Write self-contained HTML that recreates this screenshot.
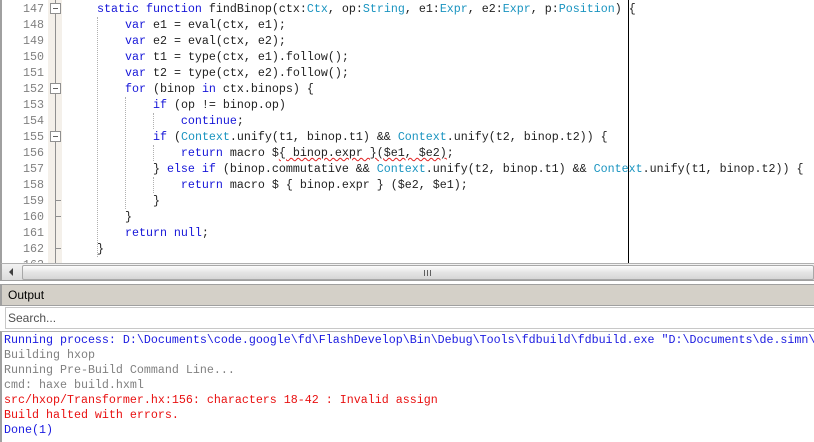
<!DOCTYPE html>
<html><head><style>
*{margin:0;padding:0;box-sizing:border-box}
body{width:814px;height:442px;overflow:hidden;background:#fff;position:relative;font-family:"Liberation Mono",monospace}
.ed{position:absolute;left:0;top:0;width:814px;height:263px;background:#fff;overflow:hidden}
.bl{position:absolute;left:0;top:0;width:2px;height:263px;background:#a0a0a0}
.ln{position:absolute;left:0;width:44px;text-align:right;font-size:11.67px;color:#808080;height:16px;line-height:16px}
.fm{position:absolute;left:48px;top:0;width:14px;height:263px;background:#f4f0ea}
.fl{position:absolute;left:55px;top:0;width:1px;height:263px;background:#909090}
.fb{position:absolute;left:50px;width:11px;height:11px;border:1px solid #909090;background:#fff}
.fb:after{content:"";position:absolute;left:2px;top:4px;width:5px;height:1px;background:#606060}
.ft{position:absolute;left:56px;width:5px;height:1px;background:#909090}
.c{position:absolute;left:69px;font-size:11.67px;line-height:16px;height:16px;white-space:pre;color:#222}
.k{color:#1515d8}.t{color:#1a94c0}
.g{position:absolute;width:0;border-left:1px dotted #b0b0b0}
.sq{text-decoration:underline wavy #e02020;text-decoration-thickness:1px}
.sb{position:absolute;left:0;top:263px;width:814px;height:18px;background:linear-gradient(#f2f2f2,#dcdcdc);border-top:1px solid #b0b0b0;border-bottom:1px solid #a0a0a0;border-left:2px solid #a0a0a0}
.th{position:absolute;left:20px;top:1px;right:0;height:15px;border:1px solid #a8a8a8;border-radius:2px;background:linear-gradient(#fdfdfd,#e4e4e4 50%,#d6d6d6)}
.hd{position:absolute;left:0;top:284px;width:814px;height:22px;background:#d4d0c8;border-top:1px solid #a0a0a0;border-bottom:1px solid #a0a0a0;border-left:2px solid #a0a0a0;font-family:"Liberation Sans",sans-serif;font-size:12px;padding:3px 6px;color:#000}
.sr{position:absolute;left:5px;top:307px;width:809px;height:22px;border:1px solid #c8c8c8;border-right:none;font-family:"Liberation Sans",sans-serif;font-size:12px;color:#505050;padding:3px 2px}
.out{position:absolute;left:0;top:331px;width:814px;height:111px;border-top:1px solid #b0b0b0;border-left:2px solid #a0a0a0}
.o{position:absolute;left:2px;font-size:11.67px;line-height:15px;white-space:pre}
</style></head><body>
<div class="ed">
<div class="bl"></div>
<div class="fm"></div><div class="fl"></div>
<div class="ln" style="top:1px">147</div><div class="ln" style="top:17px">148</div><div class="ln" style="top:33px">149</div><div class="ln" style="top:49px">150</div><div class="ln" style="top:65px">151</div><div class="ln" style="top:81px">152</div><div class="ln" style="top:97px">153</div><div class="ln" style="top:113px">154</div><div class="ln" style="top:129px">155</div><div class="ln" style="top:145px">156</div><div class="ln" style="top:161px">157</div><div class="ln" style="top:177px">158</div><div class="ln" style="top:193px">159</div><div class="ln" style="top:209px">160</div><div class="ln" style="top:225px">161</div><div class="ln" style="top:241px">162</div><div class="ln" style="top:257px">163</div>
<div class="fb" style="top:3px"></div><div class="fb" style="top:83px"></div><div class="fb" style="top:131px"></div>
<div class="ft" style="top:200px"></div><div class="ft" style="top:216px"></div><div class="ft" style="top:248px"></div>
<div class="g" style="left:97px;top:17px;height:240px"></div>
<div class="g" style="left:125px;top:97px;height:112px"></div>
<div class="g" style="left:153px;top:113px;height:16px"></div>
<div class="g" style="left:153px;top:145px;height:16px"></div>
<div class="g" style="left:153px;top:177px;height:16px"></div>
<div style="position:absolute;left:628px;top:0;width:1px;height:263px;background:#000"></div>
<div class="c" style="top:1px">    <span class="k">static function</span> findBinop(ctx:<span class="t">Ctx</span>, op:<span class="t">String</span>, e1:<span class="t">Expr</span>, e2:<span class="t">Expr</span>, p:<span class="t">Position</span>) {</div>
<div class="c" style="top:17px">        <span class="k">var</span> e1 = eval(ctx, e1);</div>
<div class="c" style="top:33px">        <span class="k">var</span> e2 = eval(ctx, e2);</div>
<div class="c" style="top:49px">        <span class="k">var</span> t1 = type(ctx, e1).follow();</div>
<div class="c" style="top:65px">        <span class="k">var</span> t2 = type(ctx, e2).follow();</div>
<div class="c" style="top:81px">        <span class="k">for</span> (binop <span class="k">in</span> ctx.binops) {</div>
<div class="c" style="top:97px">            <span class="k">if</span> (op != binop.op)</div>
<div class="c" style="top:113px">                <span class="k">continue</span>;</div>
<div class="c" style="top:129px">            <span class="k">if</span> (<span class="t">Context</span>.unify(t1, binop.t1) &amp;&amp; <span class="t">Context</span>.unify(t2, binop.t2)) {</div>
<div class="c" style="top:145px">                <span class="k">return</span> macro $<span class="sq">{ binop.expr }($e1, $e2)</span>;</div>
<div class="c" style="top:161px">            } <span class="k">else if</span> (binop.commutative &amp;&amp; <span class="t">Context</span>.unify(t2, binop.t1) &amp;&amp; <span class="t">Context</span>.unify(t1, binop.t2)) {</div>
<div class="c" style="top:177px">                <span class="k">return</span> macro $ { binop.expr } ($e2, $e1);</div>
<div class="c" style="top:193px">            }</div>
<div class="c" style="top:209px">        }</div>
<div class="c" style="top:225px">        <span class="k">return null</span>;</div>
<div class="c" style="top:241px">    }</div>
</div>
<div class="sb"><div style="position:absolute;left:7px;top:4px;width:0;height:0;border-top:4px solid transparent;border-bottom:4px solid transparent;border-right:4px solid #404040"></div><div class="th"><div style="position:absolute;left:401px;top:4px;width:7px;height:6px;border-left:1px solid #606060;border-right:1px solid #606060"><div style="margin-left:2px;width:1px;height:6px;background:#606060"></div></div></div></div>
<div class="hd">Output</div>
<div class="sr">Search...</div>
<div class="out">
<div class="o" style="top:1px;color:#1a1ae0">Running process: D:\Documents\code.google\fd\FlashDevelop\Bin\Debug\Tools\fdbuild\fdbuild.exe "D:\Documents\de.simn\</div>
<div class="o" style="top:16px;color:#808080">Building hxop</div>
<div class="o" style="top:31px;color:#808080">Running Pre-Build Command Line...</div>
<div class="o" style="top:46px;color:#808080">cmd: haxe build.hxml</div>
<div class="o" style="top:61px;color:#e81010">src/hxop/Transformer.hx:156: characters 18-42 : Invalid assign</div>
<div class="o" style="top:76px;color:#e81010">Build halted with errors.</div>
<div class="o" style="top:91px;color:#1a1ae0">Done(1)</div>
</div>
</body></html>
